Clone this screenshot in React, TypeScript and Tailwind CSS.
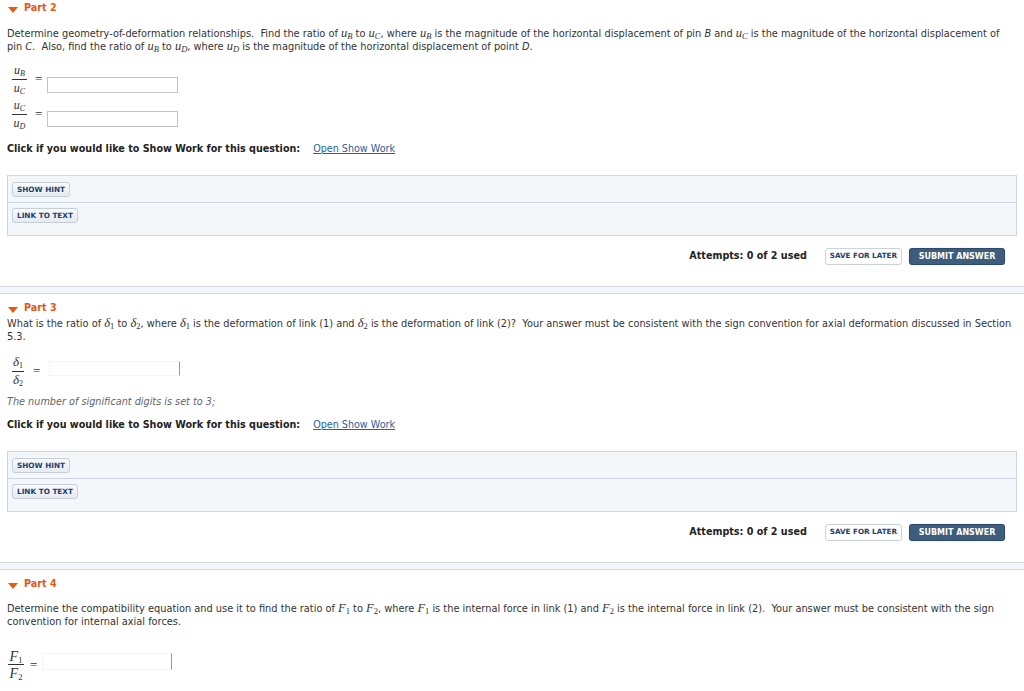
import React from "react";

const ORANGE = "text-[#e05a12]";

function Header({ label }: { label: string }) {
  return (
    <div className="flex items-center h-[14px] pl-[1px] mt-[1px]">
      <svg width="10" height="6" viewBox="0 0 10 6" className="mt-[4px]">
        <polygon points="0,0 10,0 5,6" fill="#e45c12" />
      </svg>
      <span className={`ml-[6px] font-bold leading-[14px] text-[9.6px] ${ORANGE}`}>{label}</span>
    </div>
  );
}

function M({ v, s, upright }: { v: string; s?: string; upright?: boolean }) {
  return (
    <span className="font-['Liberation_Serif',serif] italic text-[12.5px] leading-[0]">
      {v}
      {s && (
        <sub className={`text-[8.5px] leading-[0] ${upright ? "not-italic" : ""}`}>{s}</sub>
      )}
    </span>
  );
}

function HintBox() {
  const btn =
    "h-[15px] px-[4px] rounded-[3px] border border-[#c6cfd8] bg-gradient-to-b from-[#f8fafc] to-[#e6ebf0] text-[7.3px] font-bold text-[#1f3d6b] leading-[13px] flex items-center";
  return (
    <div className="mt-[20px] border border-[#cdd6df] bg-[#f4f7fa]">
      <div className="pt-[6px] pb-[5px] pl-[4px] border-b border-[#cdd6df] flex">
        <div className={btn}>SHOW HINT</div>
      </div>
      <div className="pt-[5px] pb-[12px] pl-[4px] flex">
        <div className={btn}>LINK TO TEXT</div>
      </div>
    </div>
  );
}

function Attempts() {
  return (
    <div className="mt-[12px] flex justify-end items-center pr-[12px]">
      <span className="font-bold text-[9.6px] text-[#222] mr-[18px]">Attempts: 0 of 2 used</span>
      <div className="h-[17px] px-[4px] rounded-[3px] border border-[#c9d3dd] bg-white text-[7.2px] font-bold text-[#1f3d6b] flex items-center">
        SAVE FOR LATER
      </div>
      <div className="ml-[7px] h-[17px] w-[96px] justify-center rounded-[3px] border border-[#2e4a68] bg-[#3e5d7d] text-[8px] font-bold text-white flex items-center shadow-[0_0_1px_#8aa]">
        SUBMIT ANSWER
      </div>
    </div>
  );
}

function Band() {
  return <div className="mt-[21px] h-[8px] border-y border-[#d3dce5] bg-[#f3f6f9]" />;
}

function ShowWork() {
  return (
    <div className="leading-[13px] text-[9.6px]">
      <span className="font-bold text-[#222]">Click if you would like to Show Work for this question:</span>
      <span className="ml-[13px] text-[#2a5f9a] underline">Open Show Work</span>
    </div>
  );
}

const serif = "font-['Liberation_Serif',serif] italic";

export default function App() {
  return (
    <div className="w-[1024px] min-h-[691px] bg-white font-['DejaVu_Sans',sans-serif] text-[9.8px] text-[#333]">
      {/* Part 2 */}
      <div className="px-[7px]">
        <Header label="Part 2" />
        <div className="mt-[12px] leading-[13px]">
          <div className="whitespace-nowrap">
            Determine geometry-of-deformation relationships.&nbsp; Find the ratio of <M v="u" s="B" /> to <M v="u" s="C" />, where <M v="u" s="B" /> is the magnitude of the horizontal displacement of pin <i>B</i> and <M v="u" s="C" /> is the magnitude of the horizontal displacement of
          </div>
          <div className="whitespace-nowrap">
            pin <i>C</i>.&nbsp; Also, find the ratio of <M v="u" s="B" /> to <M v="u" s="D" />, where <M v="u" s="D" /> is the magnitude of the horizontal displacement of point <i>D</i>.
          </div>
        </div>

        <div className="mt-[10px] flex h-[32px]">
          <div className={`ml-[5px] w-[15px] flex flex-col items-center ${serif} text-[12px] text-[#333]`}>
            <div className="h-[16px] leading-[14px] pb-[2px]">u<sub className="text-[8px]">B</sub></div>
            <div className="w-full h-px bg-[#333]" />
            <div className="h-[15px] leading-[14px] pt-[1px]">u<sub className="text-[8px]">C</sub></div>
          </div>
          <div className="ml-[8px] font-['Liberation_Serif',serif] text-[13px] leading-[32px]">=</div>
          <div className="ml-[5px] mt-[14px] h-[16px] w-[131px] border border-[#c3c3c3] bg-white" />
        </div>
        <div className="mt-[3px] flex h-[32px]">
          <div className={`ml-[5px] w-[15px] flex flex-col items-center ${serif} text-[12px] text-[#333]`}>
            <div className="h-[16px] leading-[14px] pb-[2px]">u<sub className="text-[8px]">C</sub></div>
            <div className="w-full h-px bg-[#333]" />
            <div className="h-[15px] leading-[14px] pt-[1px]">u<sub className="text-[8px]">D</sub></div>
          </div>
          <div className="ml-[8px] font-['Liberation_Serif',serif] text-[13px] leading-[32px]">=</div>
          <div className="ml-[5px] mt-[13px] h-[16px] w-[131px] border border-[#c3c3c3] bg-white" />
        </div>

        <div className="mt-[12px]">
          <ShowWork />
        </div>
        <HintBox />
        <Attempts />
      </div>
      <Band />

      {/* Part 3 */}
      <div className="px-[7px]">
        <div className="mt-[7px]">
          <Header label="Part 3" />
        </div>
        <div className="mt-[2px] leading-[13px]">
          <div className="whitespace-nowrap">
            What is the ratio of <M v="δ" s="1" upright /> to <M v="δ" s="2" upright />, where <M v="δ" s="1" upright /> is the deformation of link (1) and <M v="δ" s="2" upright /> is the deformation of link (2)?&nbsp; Your answer must be consistent with the sign convention for axial deformation discussed in Section
          </div>
          <div>5.3.</div>
        </div>
        <div className="mt-[12px] flex h-[32px]">
          <div className={`ml-[5px] w-[12px] flex flex-col items-center ${serif} text-[13px] text-[#333]`}>
            <div className="h-[16px] leading-[14px] pb-[2px]">δ<sub className="not-italic text-[8px]">1</sub></div>
            <div className="w-full h-px bg-[#333]" />
            <div className="h-[15px] leading-[14px] pt-[1px]">δ<sub className="not-italic text-[8px]">2</sub></div>
          </div>
          <div className="ml-[9px] font-['Liberation_Serif',serif] text-[13px] leading-[32px]">=</div>
          <div className="ml-[9px] mt-[6px] h-[15px] w-[131px] border border-[#f4f4f4] border-r-[#9a9a9a] bg-white" />
        </div>
        <div className="mt-[8px] leading-[13px] italic text-[#666] text-[9.7px]">The number of significant digits is set to 3;</div>
        <div className="mt-[10px]">
          <ShowWork />
        </div>
        <HintBox />
        <Attempts />
      </div>
      <Band />

      {/* Part 4 */}
      <div className="px-[7px]">
        <div className="mt-[7px]">
          <Header label="Part 4" />
        </div>
        <div className="mt-[11px] leading-[13px]">
          <div className="whitespace-nowrap">
            Determine the compatibility equation and use it to find the ratio of <M v="F" s="1" upright /> to <M v="F" s="2" upright />, where <M v="F" s="1" upright /> is the internal force in link (1) and <M v="F" s="2" upright /> is the internal force in link (2).&nbsp; Your answer must be consistent with the sign
          </div>
          <div>convention for internal axial forces.</div>
        </div>
        <div className="mt-[22px] flex h-[34px]">
          <div className={`ml-[1px] w-[16px] flex flex-col items-center ${serif} text-[14px] text-[#333]`}>
            <div className="h-[14px] leading-[14px]">F<sub className="not-italic text-[8.5px]">1</sub></div>
            <div className="w-full h-px bg-[#333]" />
            <div className="h-[18px] leading-[18px]">F<sub className="not-italic text-[8.5px]">2</sub></div>
          </div>
          <div className="ml-[6px] font-['Liberation_Serif',serif] text-[13px] leading-[30px]">=</div>
          <div className="ml-[5px] mt-[3px] h-[17px] w-[130px] border border-[#f4f4f4] border-r-[#9a9a9a] bg-white" />
        </div>
      </div>
    </div>
  );
}
